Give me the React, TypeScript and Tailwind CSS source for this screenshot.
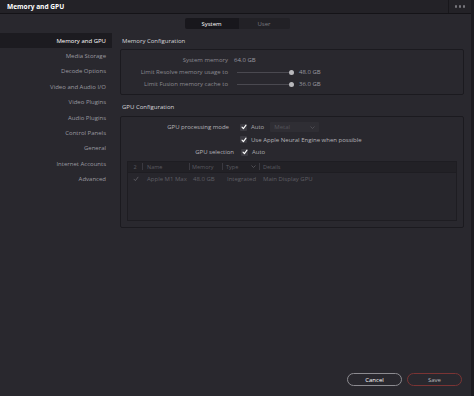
const sideItems = [
	'Memory and GPU',
	'Media Storage',
	'Decode Options',
	'Video and Audio I/O',
	'Video Plugins',
	'Audio Plugins',
	'Control Panels',
	'General',
	'Internet Accounts',
	'Advanced',
]

function Check() {
	return (
		<span className="flex items-center justify-center w-[7px] h-[7px] rounded-[1px] bg-[#3b3a41]">
			<svg width="6" height="6" viewBox="0 0 6 6" fill="none">
				<path d="M1 3.2 L2.4 4.7 L5 1.2" stroke="#ffffff" strokeWidth="1.1" strokeLinecap="round" strokeLinejoin="round" />
			</svg>
		</span>
	)
}

function Slider({ value }: { value: string }) {
	return (
		<div className="flex items-center">
			<div className="relative w-[55px] h-[1px] bg-[#4a4950] ml-[9px]">
				<span className="absolute right-[-2px] top-[-2px] w-[5px] h-[5px] rounded-full bg-[#b8b8bc]"></span>
			</div>
			<span className="ml-[7px] text-[#9a9aa0]">{value}</span>
		</div>
	)
}

export default function App() {
	return (
		<div
			className="w-[474px] h-[396px] bg-[#29282e] flex flex-col text-[6px] leading-[8px] whitespace-nowrap border-r-[3px] border-[#1c1b20]"
			style={{ fontFamily: '"Open Sans", "Liberation Sans", sans-serif' }}
		>
			<div className="flex items-center h-[14px] shrink-0 bg-[#232227] border-b border-[#141317]">
				<span className="pl-[7px] text-white font-bold text-[6.6px]">Memory and GPU</span>
				<div className="grow"></div>
				<div className="w-px h-full bg-[#18171b]"></div>
				<div className="flex gap-[1.5px] px-[6px]">
					<span className="w-[2.5px] h-[2.5px] rounded-full bg-[#77767c]"></span>
					<span className="w-[2.5px] h-[2.5px] rounded-full bg-[#77767c]"></span>
					<span className="w-[2.5px] h-[2.5px] rounded-full bg-[#77767c]"></span>
				</div>
			</div>

			<div className="flex justify-center mt-[4px] ml-[3px]">
				<div className="flex h-[11px] rounded-[2px] overflow-hidden">
					<div className="w-[54px] flex items-center justify-center bg-[#18171c] text-white">System</div>
					<div className="w-[51px] flex items-center justify-center bg-[#222126] text-[#7c7b81]">User</div>
				</div>
			</div>

			<div className="flex grow mt-[4px]">
				<div className="w-[112px] flex flex-col">
					{sideItems.map((item, i) => (
						<div
							key={item}
							className={
								i === 0
									? 'h-[15.4px] flex items-center justify-end pr-[6px] bg-[#1c1b20] text-white'
									: 'h-[15.4px] flex items-center justify-end pr-[6px] text-[#9b9aa0]'
							}
						>
							{item}
						</div>
					))}
				</div>

				<div className="flex flex-col grow pl-[8px] pr-[7px]">
					<div className="h-[16px] flex items-center pl-[2px] pb-[1px] text-[#d6d6da]">Memory Configuration</div>
					<div className="h-[46px] border border-[#1b1a1f] rounded-[2px] pt-[4px]">
						<div className="h-[12px] flex items-center">
							<span className="w-[107px] text-right text-[#8b8a90]">System memory</span>
							<span className="ml-[6px] text-[#9a9aa0]">64.0 GB</span>
						</div>
						<div className="h-[12px] flex items-center">
							<span className="w-[107px] text-right text-[#8b8a90]">Limit Resolve memory usage to</span>
							<Slider value="48.0 GB" />
						</div>
						<div className="h-[12px] flex items-center">
							<span className="w-[107px] text-right text-[#8b8a90]">Limit Fusion memory cache to</span>
							<Slider value="36.0 GB" />
						</div>
					</div>

					<div className="h-[21px] flex items-center pt-[3px] pl-[2px] text-[#d6d6da]">GPU Configuration</div>
					<div className="h-[112px] border border-[#1b1a1f] rounded-[2px] pt-[4px] flex flex-col">
						<div className="h-[12.5px] flex items-center">
							<span className="w-[108px] text-right text-[#b4b3b8]">GPU processing mode</span>
							<span className="ml-[11px]"><Check /></span>
							<span className="ml-[4px] text-[#a9a8ad]">Auto</span>
							<div className="ml-[6px] w-[49px] h-[10px] bg-[#2f2e34] rounded-[1px] flex items-center justify-between px-[4px] text-[#55545a]">
								<span>Metal</span>
								<svg width="5" height="3" viewBox="0 0 5 3" fill="none">
									<path d="M0.5 0.5 L2.5 2.5 L4.5 0.5" stroke="#55545a" strokeWidth="0.8" />
								</svg>
							</div>
						</div>
						<div className="h-[12.5px] flex items-center">
							<span className="w-[108px]"></span>
							<span className="ml-[11px]"><Check /></span>
							<span className="ml-[4px] text-[#b4b3b8]">Use Apple Neural Engine when possible</span>
						</div>
						<div className="h-[12.5px] flex items-center">
							<span className="w-[113px] text-right text-[#b4b3b8]">GPU selection</span>
							<span className="ml-[7px]"><Check /></span>
							<span className="ml-[4px] text-[#a9a8ad]">Auto</span>
						</div>

						<div className="mx-[6px] mt-[2px] h-[60px] border border-[#1e1d22] bg-[#27262c] flex flex-col">
							<div className="h-[10px] flex items-center bg-[#222126] text-[#5b5a60] text-[5.5px]">
								<span className="w-[15px] flex justify-center border-r border-[#3a3940] h-[7px] items-center">2</span>
								<span className="w-[47px] pl-[4px] border-r border-[#3a3940] h-[7px] flex items-center">Name</span>
								<span className="w-[33px] pl-[2px] border-r border-[#3a3940] h-[7px] flex items-center">Memory</span>
								<span className="w-[37px] pl-[3px] pr-[3px] border-r border-[#3a3940] h-[7px] flex items-center justify-between">
									<span>Type</span>
									<svg width="5" height="3" viewBox="0 0 5 3" fill="none">
										<path d="M0.5 0.5 L2.5 2.5 L4.5 0.5" stroke="#5b5a60" strokeWidth="0.8" />
									</svg>
								</span>
								<span className="pl-[3px]">Details</span>
							</div>
							<div className="h-[14px] flex items-center text-[#5f5e64] border-t border-[#1e1d22]">
								<span className="w-[15px] flex justify-center">
									<svg width="6" height="6" viewBox="0 0 6 6" fill="none">
										<path d="M1 3.2 L2.4 4.7 L5 1.2" stroke="#5f5e64" strokeWidth="0.9" strokeLinecap="round" />
									</svg>
								</span>
								<span className="w-[47px] pl-[4px]">Apple M1 Max</span>
								<span className="w-[33px] pl-[3px]">48.0 GB</span>
								<span className="w-[37px] pl-[4px]">Integrated</span>
								<span className="pl-[3px]">Main Display GPU</span>
							</div>
						</div>
					</div>
				</div>
			</div>

			<div className="flex justify-end gap-[5px] pr-[9px] pb-[10px]">
				<button className="w-[55px] h-[13px] rounded-full border border-[#8c8b90] text-white flex items-center justify-center">Cancel</button>
				<button className="w-[55px] h-[13px] rounded-full border border-[#7a3434] text-[#b9b8bd] flex items-center justify-center">Save</button>
			</div>
		</div>
	)
}
